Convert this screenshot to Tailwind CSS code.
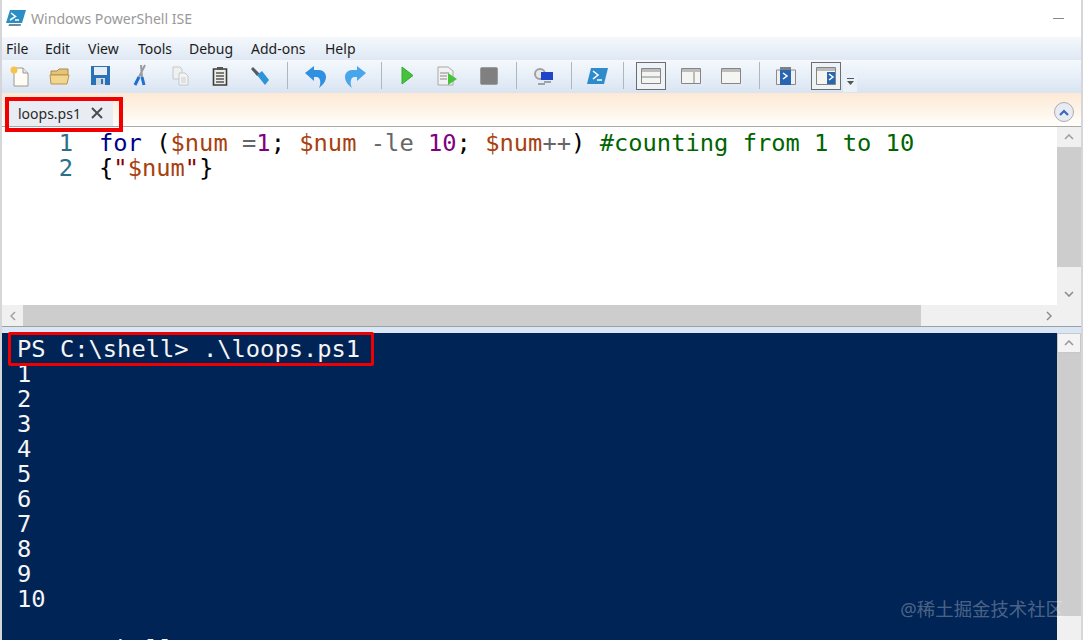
<!DOCTYPE html>
<html>
<head>
<meta charset="utf-8">
<script src="https://cdn.jsdelivr.net/npm/@tailwindcss/browser@4"></script>
</head>
<body class="w-[1083px] h-[640px] overflow-hidden bg-white font-['Noto_Sans',sans-serif]">
<div class="relative flex flex-col h-[640px] border-x-2 border-[#d4d6d9] overflow-hidden">

  <!-- title bar -->
  <div class="flex items-center h-[37px] bg-white -mx-[2px] pl-[6px] pr-[19px] shrink-0">
    <svg width="20" height="18" viewBox="0 0 20 18" class="-mt-[2px]">
      <path d="M4 1H20L16 14H0Z" fill="#2a8fc4"/>
      <path d="M3 15H15L14.500 17H2.500Z" fill="#6f8a96"/>
      <path d="M5 4L9.500 7.500L4 11" fill="none" stroke="#fff" stroke-width="1.500"/>
      <path d="M9 11H13" stroke="#fff" stroke-width="1.500"/>
    </svg>
    <span class="ml-[5px] text-[14.100px] text-[#9a9a9a]">Windows PowerShell ISE</span>
    <span class="ml-auto w-[11px] h-px bg-[#8a8a8a]"></span>
  </div>

  <!-- menu bar -->
  <div class="flex items-center h-[23px] -mx-[2px] pl-[6px] shrink-0 bg-gradient-to-b from-[#f4f8fc] to-[#dfe8f4] text-[14px] text-[#1c1c1c]">
    <span class="w-[39px]">File</span>
    <span class="w-[43px]">Edit</span>
    <span class="w-[50px]">View</span>
    <span class="w-[51px]">Tools</span>
    <span class="w-[62px]">Debug</span>
    <span class="w-[74px]">Add-ons</span>
    <span>Help</span>
  </div>

  <!-- toolbar -->
  <div class="flex items-center h-[33px] -mx-[2px] pb-[2px] shrink-0 bg-gradient-to-b from-[#f5f9fd] to-[#d9e4f2]">
    <div class="w-[40px] flex justify-center">
      <svg width="22" height="22" viewBox="0 0 22 22"><path d="M5 3H14L19 8V21H5Z" fill="#fdfdf6" stroke="#9a9a90"/><path d="M14 3V8H19" fill="#e8e8e0" stroke="#9a9a90"/><circle cx="5" cy="5" r="3.500" fill="#f5c24a"/></svg>
    </div>
    <div class="w-[40px] flex justify-center">
      <svg width="22" height="20" viewBox="0 0 22 20"><path d="M2 5H8L10 3H19V9H2Z" fill="#e4c47a" stroke="#ab8a45"/><path d="M1 9H20L18 18H2Z" fill="#f2d68f" stroke="#b8944a"/></svg>
    </div>
    <div class="w-[40px] flex justify-center">
      <svg width="21" height="21" viewBox="0 0 21 21"><path d="M1 1H20V20H1Z" fill="#2a72b8"/><path d="M4 2H17V10H4Z" fill="#e8edf2"/><path d="M6 13H15V20H6Z" fill="#d0d8e0"/><path d="M11 14H13V19H11Z" fill="#2a72b8"/></svg>
    </div>
    <div class="w-[40px] flex justify-center">
      <svg width="16" height="23" viewBox="0 0 16 23"><path d="M13 1L7 13M9 1L10 13" stroke="#9b9ba0" stroke-width="2"/><path d="M7 13L3 21M10 13L12 21" stroke="#1f70d0" stroke-width="3"/></svg>
    </div>
    <div class="w-[40px] flex justify-center">
      <svg width="17" height="20" viewBox="0 0 17 20"><path d="M1 1H8L10 3V13H1Z" fill="#f0f0f0" stroke="#c4c8cc"/><path d="M7 7H13L16 10V19H7Z" fill="#f4f4f4" stroke="#c4c8cc"/><path d="M9 12H14M9 14H14M9 16H14" stroke="#c9cdd0"/></svg>
    </div>
    <div class="w-[40px] flex justify-center">
      <svg width="16" height="20" viewBox="0 0 16 20"><path d="M1.500 3H14.500V19H1.500Z" fill="#eceee8" stroke="#3c3c3c" stroke-width="1.600"/><path d="M5 1H11V4H5Z" fill="#555"/><path d="M4 7H12M4 10H12M4 13H12M4 16H12" stroke="#555" stroke-width="1.300"/></svg>
    </div>
    <div class="w-[40px] flex justify-center">
      <svg width="20" height="20" viewBox="0 0 20 20"><path d="M1 3L3 1L10 8L7 10Z" fill="#555b66"/><path d="M7 9L12 5L19 14L15 19Z" fill="#2e94d8"/></svg>
    </div>
    <div class="w-[14px] flex justify-center"><span class="w-px h-[27px] bg-[#aeb6c0]"></span></div>
    <div class="w-[42px] flex justify-center">
      <svg width="21" height="24" viewBox="0 0 21 24"><path d="M0 9L9 2V6H14C19 6 21 10 21 13C21 17 18 21 14 24C16 20 16 14 12 13H9V17Z" fill="#2f8fe0"/></svg>
    </div>
    <div class="w-[38px] flex justify-center">
      <svg width="21" height="24" viewBox="0 0 21 24"><path d="M21 9L12 2V6H7C2 6 0 10 0 13C0 17 3 21 7 24C5 20 5 14 9 13H12V17Z" fill="#4aa6ea"/></svg>
    </div>
    <div class="w-[14px] flex justify-center"><span class="w-px h-[27px] bg-[#aeb6c0]"></span></div>
    <div class="w-[38px] flex justify-center">
      <svg width="13" height="19" viewBox="0 0 13 19"><path d="M1 1L12 9.500L1 18Z" fill="#46c23c" stroke="#38a830"/></svg>
    </div>
    <div class="w-[42px] flex justify-center">
      <svg width="21" height="20" viewBox="0 0 21 20"><path d="M1 1H11L16 5V19H1Z" fill="#f2f2f2" stroke="#a8a8a8"/><path d="M3 7H12M3 10H10M3 13H10" stroke="#8a8a8a"/><path d="M11 7L20 13L11 19Z" fill="#46c23c"/></svg>
    </div>
    <div class="w-[42px] flex justify-center">
      <span class="w-[18px] h-[18px] rounded-[2px] bg-[#808080] border border-[#9c9c9c]"></span>
    </div>
    <div class="w-[12px] flex justify-center"><span class="w-px h-[27px] bg-[#aeb6c0]"></span></div>
    <div class="w-[42px] flex justify-center">
      <svg width="21" height="20" viewBox="0 0 21 20"><circle cx="7" cy="8" r="5" fill="#e8e8e8" stroke="#a0a0a0" stroke-width="2"/><path d="M8 6H20V14H8Z" fill="#1f44c8"/><path d="M11 16H18M5 18H12" stroke="#8a8a8a" stroke-width="1.500"/></svg>
    </div>
    <div class="w-[14px] flex justify-center"><span class="w-px h-[27px] bg-[#aeb6c0]"></span></div>
    <div class="w-[38px] flex justify-center">
      <svg width="21" height="18" viewBox="0 0 21 18"><path d="M4 1H21L17 17H0Z" fill="#2e8ccc"/><path d="M6 4L11 8L6 12" fill="none" stroke="#fff" stroke-width="1.600"/><path d="M10 13H15" stroke="#fff" stroke-width="1.500"/></svg>
    </div>
    <div class="w-[14px] flex justify-center"><span class="w-px h-[27px] bg-[#aeb6c0]"></span></div>
    <div class="w-[30px] h-[28px] ml-[6px] flex items-center justify-center border border-[#6d6d6d] bg-[#eef3f8]">
      <svg width="20" height="16" viewBox="0 0 20 16"><path d="M.500.500H19.500V15.500H.500Z" fill="#f4f4f2" stroke="#858585"/><path d="M1 1H19V4H1Z" fill="#bcbcbc"/><path d="M1 9H19" stroke="#858585"/></svg>
    </div>
    <div class="w-[50px] flex justify-center">
      <svg width="20" height="16" viewBox="0 0 20 16"><path d="M.500.500H19.500V15.500H.500Z" fill="#f4f4f2" stroke="#858585"/><path d="M1 1H19V4H1Z" fill="#bcbcbc"/><path d="M13 4V15" stroke="#858585"/></svg>
    </div>
    <div class="w-[30px] flex justify-center">
      <svg width="20" height="16" viewBox="0 0 20 16"><path d="M.500.500H19.500V15.500H.500Z" fill="#f4f4f2" stroke="#858585"/><path d="M1 1H19V4H1Z" fill="#bcbcbc"/></svg>
    </div>
    <div class="w-[26px] flex justify-center"><span class="w-px h-[27px] bg-[#aeb6c0]"></span></div>
    <div class="w-[28px] flex justify-center">
      <svg width="20" height="20" viewBox="0 0 20 20"><path d="M.500 4H19.500V18.500H.500Z" fill="#eef0f2" stroke="#8a8a8a"/><path d="M4 1H15V19H4Z" fill="#2a66b0"/><path d="M4 1H15V4H4Z" fill="#77828c"/><path d="M7 7L11 10L7 13" fill="none" stroke="#fff" stroke-width="1.500"/></svg>
    </div>
    <div class="w-[30px] h-[28px] ml-[11px] flex items-center justify-center border border-[#6d6d6d] bg-[#eef3f8]">
      <svg width="20" height="18" viewBox="0 0 20 18"><path d="M.500.500H19.500V17.500H.500Z" fill="#f4f4f2" stroke="#858585"/><path d="M1 1H19V4H1Z" fill="#bcbcbc"/><path d="M11 5H19V17H11Z" fill="#2a66b0"/><path d="M13 7L17 10L13 13" fill="none" stroke="#fff" stroke-width="1.500"/></svg>
    </div>
    <div class="w-[14px] h-[20px] ml-[2px] mt-[12px] flex flex-col items-center justify-center gap-[2px] bg-[#ebf1f8]">
      <span class="w-[7px] h-px bg-[#555]"></span>
      <svg width="7" height="4" viewBox="0 0 7 4"><path d="M0 0H7L3.500 4Z" fill="#555"/></svg>
    </div>
  </div>

  <!-- tab strip -->
  <div class="flex items-end justify-between h-[34px] -mx-[2px] shrink-0 bg-gradient-to-b from-[#fde9d4] to-[#fffefb] border-b border-[#a9a9a9]">
    <div class="flex items-center h-[27px] ml-[7px] w-[106px] pl-[11px] pt-[1px] gap-[10px] bg-[#e9edf3] text-[14px] text-[#2a2a2a]">
      <span>loops.ps1</span>
      <svg width="12" height="12" viewBox="0 0 12 12"><path d="M1 1L11 11M11 1L1 11" stroke="#4d4d4d" stroke-width="2"/></svg>
    </div>
    <div class="flex items-center justify-center w-[20px] h-[20px] mr-[9px] mb-[4px] rounded-full bg-[#e8ecf2] border border-[#a8adb4]">
      <svg width="10" height="7" viewBox="0 0 10 7"><path d="M1 6L5 2L9 6" fill="none" stroke="#3768c0" stroke-width="2.200"/></svg>
    </div>
  </div>

  <!-- editor -->
  <div class="flex h-[178px] shrink-0 bg-white overflow-hidden">
    <div class="flex-1 flex font-['DejaVu_Sans_Mono',monospace] text-[23.750px] leading-[25px] pt-[4px]">
      <div class="w-[71px] text-right text-[#2b6f8a]">
        <div>1</div>
        <div>2</div>
      </div>
      <div class="ml-[26px] flex flex-col text-black">
        <div class="whitespace-pre"><span class="text-[#00008b]">for</span> (<span class="text-[#a8400f]">$num</span> <span class="text-[#666]">=</span><span class="text-[#800080]">1</span>; <span class="text-[#a8400f]">$num</span> <span class="text-[#666]">-le</span> <span class="text-[#800080]">10</span>; <span class="text-[#a8400f]">$num</span><span class="text-[#666]">++</span>) <span class="text-[#006400]">#counting from 1 to 10</span></div>
        <div class="whitespace-pre">{<span class="text-[#8b0000]">"</span><span class="text-[#a8400f]">$num</span><span class="text-[#8b0000]">"</span>}</div>
      </div>
    </div>
    <div class="flex flex-col w-[24px] bg-[#f0f0f0] shrink-0">
      <div class="flex items-center justify-center h-[20px]">
        <svg width="10" height="6" viewBox="0 0 10 6"><path d="M1 5L5 1L9 5" fill="none" stroke="#a0a0a0" stroke-width="1.600"/></svg>
      </div>
      <div class="h-[120px] bg-[#cdcdcd]"></div>
      <div class="flex-1 flex items-end justify-center pb-[8px]">
        <svg width="10" height="6" viewBox="0 0 10 6"><path d="M1 1L5 5L9 1" fill="none" stroke="#8c8c8c" stroke-width="1.600"/></svg>
      </div>
    </div>
  </div>

  <!-- horizontal scrollbar -->
  <div class="flex h-[21px] shrink-0 bg-[#f0f0f0]">
    <div class="flex items-center justify-center w-[21px]">
      <svg width="6" height="10" viewBox="0 0 6 10"><path d="M5 1L1 5L5 9" fill="none" stroke="#a0a0a0" stroke-width="1.500"/></svg>
    </div>
    <div class="w-[898px] bg-[#cdcdcd]"></div>
    <div class="flex flex-1 items-center justify-end pr-[29px]">
      <svg width="6" height="10" viewBox="0 0 6 10"><path d="M1 1L5 5L1 9" fill="none" stroke="#8c8c8c" stroke-width="1.500"/></svg>
    </div>
  </div>

  <!-- splitter -->
  <div class="h-[7px] shrink-0 -mx-[2px] border-t border-[#a0a0a0] bg-[#d9e6f5]"></div>

  <!-- console -->
  <div class="flex flex-1 min-h-0 bg-[#012456]">
    <div class="flex flex-col flex-1 pl-[15px] pt-[4px] overflow-hidden font-['DejaVu_Sans_Mono',monospace] text-[23.750px] leading-[25px] text-[#f5f5f5]">
      <div class="shrink-0 whitespace-pre">PS C:\shell&gt; .\loops.ps1</div>
      <div class="shrink-0">1</div>
      <div class="shrink-0">2</div>
      <div class="shrink-0">3</div>
      <div class="shrink-0">4</div>
      <div class="shrink-0">5</div>
      <div class="shrink-0">6</div>
      <div class="shrink-0">7</div>
      <div class="shrink-0">8</div>
      <div class="shrink-0">9</div>
      <div class="shrink-0">10</div>
      <div class="shrink-0 h-[25px]"></div>
      <div class="shrink-0 whitespace-pre">PS C:\shell&gt;</div>
    </div>
    <div class="flex flex-col w-[24px] bg-[#f0f0f0] shrink-0">
      <div class="flex items-center justify-center h-[20px] border border-[#c8c8c8] bg-[#f4f4f4]">
        <svg width="10" height="6" viewBox="0 0 10 6"><path d="M1 5L5 1L9 5" fill="none" stroke="#9a9a9a" stroke-width="1.600"/></svg>
      </div>
      <div class="h-[263px] bg-[#cdcdcd]"></div>
    </div>
  </div>

  <!-- red highlight boxes drawn over the screenshot -->
  <div class="absolute left-[3px] top-[97px] w-[118px] h-[35px] border-4 border-[#f00000]"></div>
  <div class="absolute left-[6px] top-[332px] w-[366px] h-[34px] border-[3px] border-[#f00000] rounded-[2px]"></div>

  <!-- watermark -->
  <div class="absolute right-[17px] top-[597px] text-[18.400px] leading-[24px] text-white/30 font-['Noto_Sans','Noto_Sans_CJK_SC',sans-serif]">@稀土掘金技术社区</div>
</div>
</body>
</html>
